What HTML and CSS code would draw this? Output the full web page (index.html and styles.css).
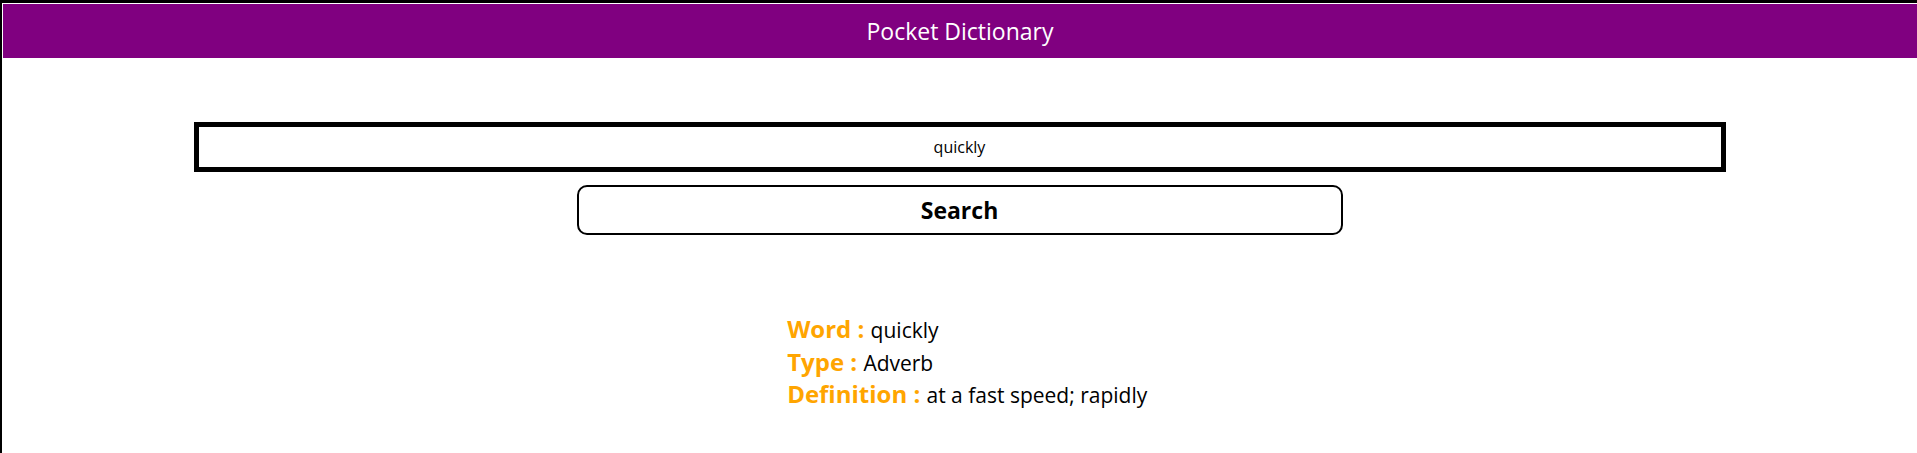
FILE: index.html
```html
<!DOCTYPE html>
<html lang="en">
<head>
<meta charset="utf-8">
<title>Pocket Dictionary</title>
<link rel="stylesheet" href="styles.css">
</head>
<body>
<header class="app-header">Pocket Dictionary</header>
<main class="app-main">
  <div class="search-form">
    <input class="search-input" type="text" value="quickly">
    <button class="search-button" type="button">Search</button>
  </div>
  <section class="result">
    <div class="result-row"><span class="result-label">Word :</span> <span class="result-value">quickly</span></div>
    <div class="result-row"><span class="result-label">Type :</span> <span class="result-value">Adverb</span></div>
    <div class="result-row"><span class="result-label">Definition :</span> <span class="result-value">at a fast speed; rapidly</span></div>
  </section>
</main>
</body>
</html>
```
FILE: styles.css
```css
html, body {
  height: 100%;
}
body {
  margin: 0;
  border-top: 3px solid #000;
  border-left: 2px solid #000;
  background: #fff;
  font-family: "Open Sans", "Noto Sans", "Liberation Sans", sans-serif;
  color: #000;
  box-sizing: border-box;
}
.app-header {
  margin: 1px 0 0 1px;
  height: 54px;
  background: #800080;
  color: #fff;
  font-size: 23px;
  line-height: 54px;
  text-align: center;
}
.app-main {
  padding-top: 64px;
}
.search-form {
  display: flex;
  flex-direction: column;
  align-items: center;
  gap: 13px;
}
.search-input {
  box-sizing: border-box;
  width: 80%;
  height: 50px;
  border: 5px solid #000;
  border-radius: 0;
  padding: 0;
  margin: 0;
  font-family: inherit;
  font-size: 16px;
  text-align: center;
  color: #000;
  outline: none;
  background: #fff;
}
.search-button {
  box-sizing: border-box;
  width: 40%;
  height: 50px;
  border: 2px solid #000;
  border-radius: 10px;
  background: #fff;
  font-family: inherit;
  font-size: 23px;
  font-weight: 700;
  color: #000;
  padding: 0;
  margin: 0;
}
.result {
  margin-top: 78px;
  margin-left: 41%;
  font-size: 24px;
  line-height: 32.5px;
}
.result-row {
  white-space: nowrap;
}
.result-label {
  color: #ffa500;
  font-weight: 700;
  font-size: 24px;
  line-height: 1;
}
.result-value {
  font-size: 21px;
  line-height: 1;
}
```
